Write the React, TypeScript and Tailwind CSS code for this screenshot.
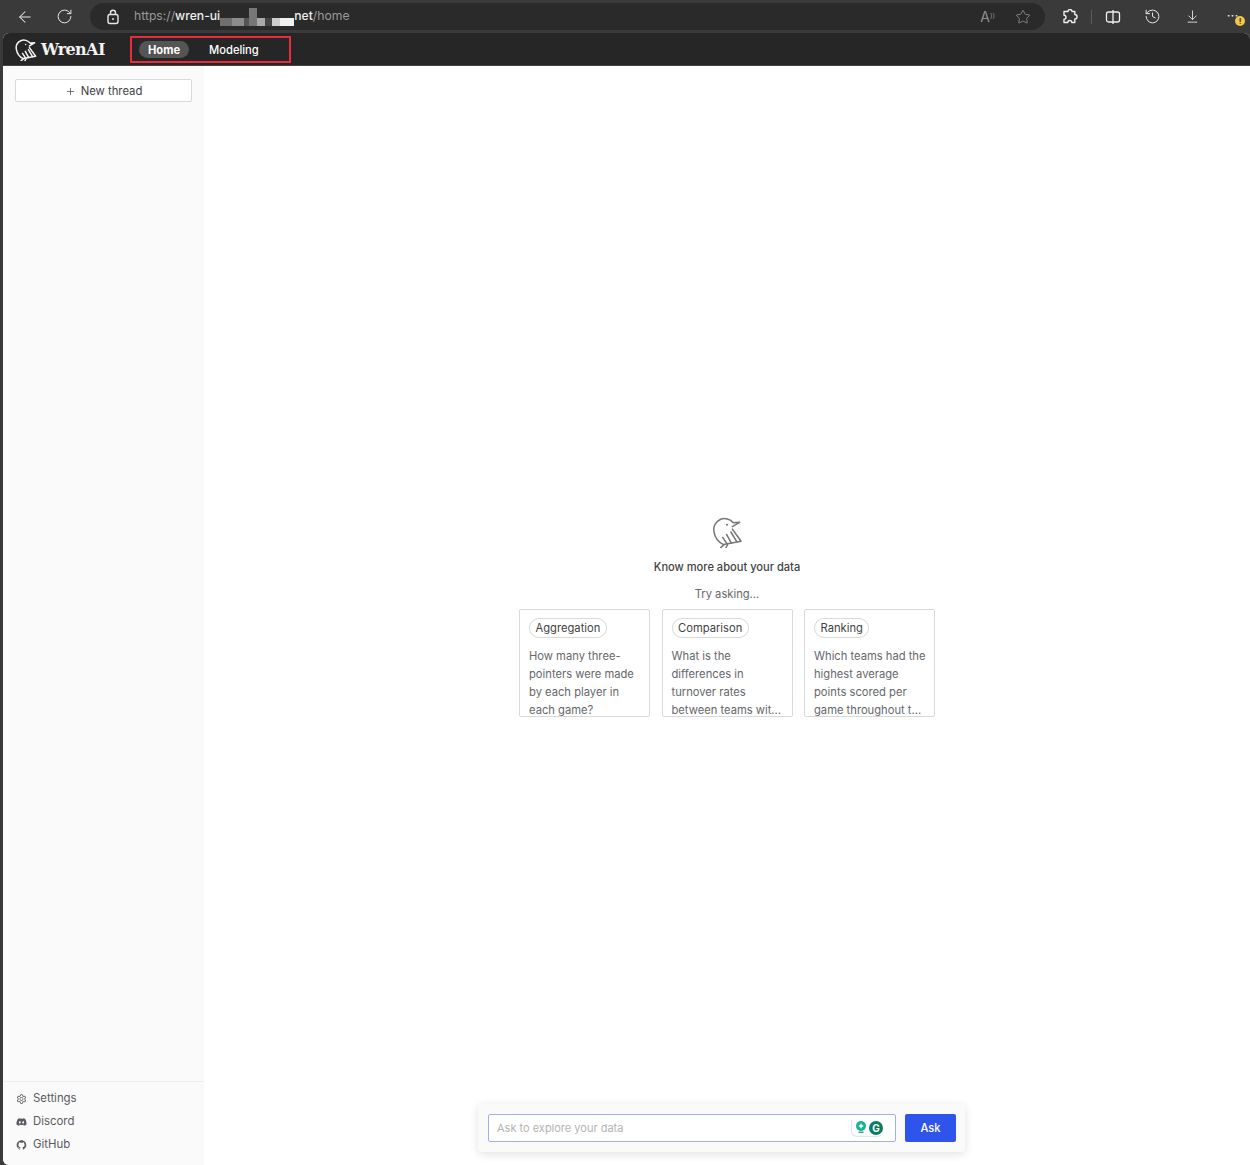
import React from "react";
import { ArrowLeft, RotateCw, Star, Plus, History, ArrowDownToLine } from "lucide-react";
import { AiOutlineSetting, AiFillGithub } from "react-icons/ai";
import { FaDiscord } from "react-icons/fa";

function Bird({ size, color, sw = 2 }: { size: number; color: string; sw?: number }) {
  return (
    <svg width={size} height={size} viewBox="0 0 32 32" fill="none" stroke={color} strokeWidth={sw} strokeLinecap="round" strokeLinejoin="round">
      <path d="M28.5 5.5 L22 6 C19 2 13 0.5 8.5 2.5 C3.5 4.8 1 10 2 15 C3 21 6.5 26 12 28.5 L30 25 L21 12.5 M28.5 5.5 L21 10" />
      <path d="M11 21 L15 27 M15 18 L20 27 M19.5 15.5 L25.5 25.5" />
      <path d="M12 29 L9 31.5 M16 28.5 L14.5 31.5" />
      <circle cx="15.5" cy="8" r="1.1" fill={color} stroke="none" />
    </svg>
  );
}

function Card({ tag, lines }: { tag: string; lines: string[] }) {
  return (
    <div className="w-[131px] h-[108px] overflow-hidden rounded-[2px] border border-[#d9d9d9] pl-[9px] pt-[8px] text-[11.2px] text-[#65676c]">
      <span className="inline-block h-[20px] rounded-full border border-[#d9d9d9] px-[5.5px] leading-[18px] text-[#434343]">{tag}</span>
      <div className="mt-[9px] leading-[18px] whitespace-nowrap">
        {lines.map((l) => (
          <div key={l}>{l}</div>
        ))}
      </div>
    </div>
  );
}

function SideLink({ icon, label }: { icon: React.ReactNode; label: string }) {
  return (
    <div className="flex h-[23px] items-center gap-[6px] pl-[13px] text-[11.4px] text-[#595b60]">
      <span className="flex w-[11px] justify-center">{icon}</span>
      {label}
    </div>
  );
}

export default function App() {
  return (
    <div className="flex h-[1165px] w-[1250px] flex-col overflow-hidden bg-[#3a3a3a]" style={{ fontFamily: "Inter, sans-serif" }}>
      {/* browser toolbar */}
      <div className="flex h-[33px] shrink-0 items-center text-[#e6e6e6]">
        <div className="flex w-[90px] items-center pl-[16px]">
          <ArrowLeft size={18} strokeWidth={1.4} />
          <RotateCw size={17} strokeWidth={1.4} className="ml-[22px]" />
        </div>
        <div className="flex h-[27px] w-[955px] items-center rounded-full bg-[#2a2a2a] pl-[16px] text-[12.2px]">
          <svg width="14" height="16" viewBox="0 0 14 16" fill="none" stroke="#e8e8e8" strokeWidth="1.4">
            <rect x="2" y="5.5" width="10" height="9" rx="2" />
            <path d="M4.5 5.5 V3.8 a2.5 2.5 0 0 1 5 0 V5.5" />
            <circle cx="7" cy="10" r="1" fill="#e8e8e8" stroke="none" />
          </svg>
          <span className="ml-[14px] text-[#9a9a9a]">https://</span>
          <span className="font-medium text-[#f0f0f0]">wren-ui</span>
          <div className="flex h-[18px] w-[74px] items-end">
            <span className="h-[8px] w-[12px] bg-[#6f6f6f]" />
            <span className="h-[8px] w-[12px] bg-[#8c8c8c]" />
            <span className="h-[8px] w-[5px] bg-[#555]" />
            <span className="h-[18px] w-[8px] bg-[#777]" />
            <span className="h-[8px] w-[8px] bg-[#aaa]" />
            <span className="h-[8px] w-[7px] bg-[#444]" />
            <span className="h-[8px] w-[8px] bg-[#ccc]" />
            <span className="h-[8px] w-[14px] bg-[#f0f0f0]" />
          </div>
          <span className="font-medium text-[#f0f0f0]">net</span>
          <span className="text-[#9a9a9a]">/home</span>
          <div className="ml-auto flex items-center pr-[14px] text-[#8f8f8f]">
            <span className="mr-[20px] text-[14px] leading-none">A<sup className="text-[7px]">))</sup></span>
            <Star size={16} strokeWidth={1.3} />
          </div>
        </div>
        <div className="flex flex-1 items-center pl-[17px]">
          <svg width="16" height="16" viewBox="0 0 16 16" fill="none" stroke="#eee" strokeWidth="1.4" strokeLinejoin="round">
            <path d="M6 2.5 a2 2 0 0 1 4 0 h2.8 v3 a2 2 0 0 1 0 4.5 v3.5 h-3 a2 2 0 0 0 -4 0 H2 v-3.2 a2 2 0 0 0 0 -4 V2.5 Z" />
          </svg>
          <span className="ml-[13px] h-[14px] w-px bg-[#5c5c5c]" />
          <svg className="ml-[13px]" width="16" height="16" viewBox="0 0 16 16" fill="none" stroke="#eee" strokeWidth="1.3">
            <rect x="1.5" y="3" width="13" height="10" rx="2" />
            <path d="M8 1 V15" />
          </svg>
          <History size={17} strokeWidth={1.4} className="ml-[23px]" />
          <ArrowDownToLine size={15} strokeWidth={1.4} className="ml-[24px]" />
          <div className="relative ml-[27px] flex h-[16px] w-[20px] items-start">
            <span className="mt-[5px] text-[10px] font-bold leading-[3px] tracking-[0.5px] text-[#eee]">···</span>
            <span className="absolute left-[8px] top-[7px] flex h-[10px] w-[10px] items-center justify-center rounded-full bg-[#f2c744] text-[8px] font-bold leading-none text-[#333]">!</span>
          </div>
        </div>
      </div>

      {/* app window */}
      <div className="ml-[3px] flex min-h-0 flex-1 flex-col overflow-hidden rounded-t-[6px] rounded-bl-[6px] bg-white">
        <div className="flex h-[33px] shrink-0 items-center border-b border-[#444] bg-[#262626] pl-[12px] pt-[1px]">
          <Bird size={22} color="#f2f2f2" sw={2.2} />
          <span className="ml-[4px] w-[64px] text-[16px] font-bold text-[#f2f2f2]" style={{ fontFamily: "'DejaVu Serif', serif", letterSpacing: "-0.6px" }}>
            WrenAI
          </span>
          <nav className="ml-[25px] flex h-[27px] w-[161px] items-center border-2 border-[#ea2b3c] pl-[7px] text-[11.2px] text-white">
            <span className="flex h-[17px] w-[50px] items-center justify-center rounded-full bg-[#555] pt-[1px] font-bold">Home</span>
            <span className="ml-[20px] pt-[1px] font-medium">Modeling</span>
          </nav>
        </div>

        <div className="flex min-h-0 flex-1">
          <aside className="flex w-[201px] shrink-0 flex-col bg-[#fafafa]">
            <div className="px-[12px] pt-[13px]">
              <div className="flex h-[23px] items-center justify-center gap-[5px] rounded-[2px] border border-[#d9d9d9] bg-white pt-[1px] text-[11.3px] text-[#434343]">
                <Plus size={11} strokeWidth={1.5} />
                New thread
              </div>
            </div>
            <div className="mt-auto border-t border-[#eeeeee] pb-[9px] pt-[5px]">
              <SideLink icon={<AiOutlineSetting size={12} />} label="Settings" />
              <SideLink icon={<FaDiscord size={12} />} label="Discord" />
              <SideLink icon={<AiFillGithub size={12} />} label="GitHub" />
            </div>
          </aside>

          <main className="flex flex-1 flex-col items-center">
            <div className="mt-[451px] flex flex-col items-center">
              <Bird size={31} color="#777777" sw={1.6} />
              <div className="mt-[10px] text-[11.1px] font-medium leading-[18px] text-[#434343]">Know more about your data</div>
              <div className="mt-[9px] text-[11.2px] leading-[18px] text-[#65676c]">Try asking...</div>
              <div className="mt-[6px] flex gap-[11.5px]">
                <Card tag="Aggregation" lines={["How many three-", "pointers were made", "by each player in", "each game?"]} />
                <Card tag="Comparison" lines={["What is the", "differences in", "turnover rates", "between teams wit..."]} />
                <Card tag="Ranking" lines={["Which teams had the", "highest average", "points scored per", "game throughout t..."]} />
              </div>
            </div>

            <div className="mb-[13px] mr-[11px] mt-auto flex h-[48px] w-[487px] items-center rounded-[4px] bg-[#fafafa] px-[10px] shadow-[0_2px_10px_rgba(0,0,0,0.12)]">
              <div className="flex h-[28px] w-[408px] shrink-0 items-center rounded-[2px] border border-[#9fb0ee] bg-white pl-[8px] text-[11px] text-[#b3b3b3]">
                Ask to explore your data
                <div className="ml-auto mr-[12px] flex h-[17px] items-center gap-[3px] rounded-b-[6px] border-b border-l border-[#e4e4e4] pl-[4px]">
                  <svg width="10" height="14" viewBox="0 0 10 14">
                    <circle cx="5" cy="5" r="5" fill="#15b392" />
                    <path d="M5 2.8 V7.2 M2.8 5 H7.2" stroke="#fff" strokeWidth="1.4" />
                    <rect x="2.5" y="10.5" width="5" height="1.5" fill="#15b392" />
                  </svg>
                  <span className="flex h-[14px] w-[14px] items-center justify-center rounded-full bg-[#0d7a63] text-[10px] font-bold leading-none text-white">G</span>
                </div>
              </div>
              <div className="ml-[9px] flex h-[28px] w-[51px] shrink-0 items-center justify-center rounded-[2px] bg-[#2f54eb] text-[11.2px] font-medium text-white">Ask</div>
            </div>
          </main>
        </div>
      </div>
    </div>
  );
}
